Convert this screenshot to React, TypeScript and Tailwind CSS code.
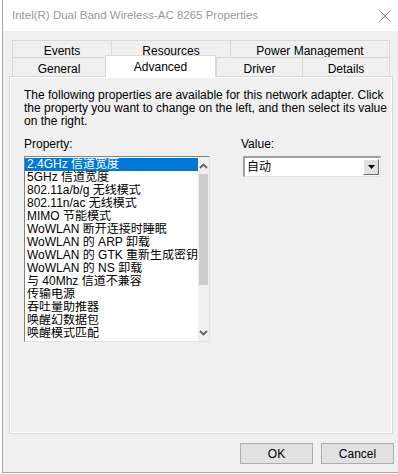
import React from "react";

const PROPERTIES = [
    "2.4GHz 信道宽度",
    "5GHz 信道宽度",
    "802.11a/b/g 无线模式",
    "802.11n/ac 无线模式",
    "MIMO 节能模式",
    "WoWLAN 断开连接时睡眠",
    "WoWLAN 的 ARP 卸载",
    "WoWLAN 的 GTK 重新生成密钥",
    "WoWLAN 的 NS 卸载",
    "与 40Mhz 信道不兼容",
    "传输电源",
    "吞吐量助推器",
    "唤醒幻数据包",
    "唤醒模式匹配",
];

function Tab({ label, width, last }: { label: string; width: string; last?: boolean }) {
    return (
        <div
            className={`${width} h-full flex items-center justify-center pt-[3px] border-t border-l border-[#d9d9d9] ${
                last ? "border-r" : ""
            } bg-[#f0f0f0] text-[12px] leading-none text-black`}
        >
            {label}
        </div>
    );
}

function ScrollBar() {
    return (
        <div className="w-[17px] h-full flex flex-col bg-[#f0f0f0]">
            <div className="h-[17px] flex items-center justify-center">
                <svg width="9" height="6" viewBox="0 0 9 6">
                    <path d="M1 5 L4.5 1.5 L8 5" fill="none" stroke="#606060" strokeWidth="1.8" />
                </svg>
            </div>
            <div className="h-[111px] mx-[1px] bg-[#cdcdcd]" />
            <div className="flex-1" />
            <div className="h-[17px] flex items-center justify-center">
                <svg width="9" height="6" viewBox="0 0 9 6">
                    <path d="M1 1 L4.5 4.5 L8 1" fill="none" stroke="#606060" strokeWidth="1.8" />
                </svg>
            </div>
        </div>
    );
}

export default function App() {
    return (
        <div className="w-[398px] h-[474px] bg-white overflow-hidden font-['Liberation_Sans','Noto_Sans_CJK_SC',sans-serif]">
            <div className="ml-[2px] w-[396px] h-[473px] border-l border-b border-[#a8a8a8] bg-[#f0f0f0] flex flex-col">
                {/* title bar */}
                <div className="h-[31px] bg-white flex items-center justify-between pl-[9px] pr-[7px]">
                    <span className="text-[11.5px] text-[#999999]">Intel(R) Dual Band Wireless-AC 8265 Properties</span>
                    <svg width="12" height="12" viewBox="0 0 12 12">
                        <path d="M0.5 0.5 L11.5 11.5 M11.5 0.5 L0.5 11.5" stroke="#888888" strokeWidth="1" />
                    </svg>
                </div>

                <div className="pt-[9px] pl-[6px]">
                    {/* tabs */}
                    <div className="ml-[3px] w-[378px] h-[17px] flex">
                        <Tab label="Events" width="w-[99px]" />
                        <Tab label="Resources" width="w-[119px]" />
                        <Tab label="Power Management" width="w-[160px]" last />
                    </div>
                    <div className="ml-[3px] w-[378px] h-[19px] flex">
                        <Tab label="General" width="w-[93px]" />
                        <div className="relative z-10 w-[111px] h-[22px] -mt-[2px] flex items-start justify-center pt-[5px] bg-white border-t border-l border-r border-[#d9d9d9] text-[12px] leading-none text-black">
                            Advanced
                        </div>
                        <Tab label="Driver" width="w-[86px]" />
                        <Tab label="Details" width="w-[88px]" last />
                    </div>

                    {/* page */}
                    <div className="w-[384px] h-[358px] border border-[#d9d9d9]">
                        <div className="h-full border border-white pl-[13px] pt-[11px]">
                            <p className="text-[12px] leading-[13px] text-black whitespace-nowrap">
                                The following properties are available for this network adapter. Click
                                <br />
                                the property you want to change on the left, and then select its value
                                <br />
                                on the right.
                            </p>

                            <div className="mt-[10px] flex gap-[31px]">
                                <div className="flex flex-col">
                                    <span className="text-[12px] leading-[13px] text-black">Property:</span>
                                    <div className="mt-[5px] w-[186px] h-[186px] flex border-t border-l border-[#828282] border-r-[#e3e3e3] border-b-[#e3e3e3] border-r border-b bg-white">
                                        <div className="flex-1 flex flex-col pt-[1px]">
                                            {PROPERTIES.map((p, i) => (
                                                <div
                                                    key={p}
                                                    className={`h-[13px] pl-[2px] text-[12px] leading-[13px] whitespace-nowrap overflow-hidden ${
                                                        i === 0 ? "bg-[#0078d7] text-white" : "text-black"
                                                    }`}
                                                >
                                                    {p}
                                                </div>
                                            ))}
                                        </div>
                                        <ScrollBar />
                                    </div>
                                </div>

                                <div className="flex flex-col">
                                    <span className="text-[12px] leading-[13px] text-black">Value:</span>
                                    <div className="mt-[5px] ml-[2px] w-[138px] h-[21px] border-t-2 border-l-2 border-[#a0a0a0] border-r border-b border-r-[#e3e3e3] border-b-[#e3e3e3] bg-white flex items-center">
                                        <span className="flex-1 pl-[2px] text-[12px] leading-none text-black">自动</span>
                                        <div className="w-[16px] h-[16px] mr-[1px] bg-[#e1e1e1] border border-t-white border-l-white border-r-[#696969] border-b-[#696969] flex items-center justify-center">
                                            <svg width="7" height="4" viewBox="0 0 7 4">
                                                <path d="M0 0 L7 0 L3.5 4 Z" fill="#000000" />
                                            </svg>
                                        </div>
                                    </div>
                                </div>
                            </div>
                        </div>
                    </div>

                    {/* buttons */}
                    <div className="mt-[9px] flex justify-end gap-[8px] pr-[4px]">
                        <button className="w-[73px] h-[21px] bg-[#e1e1e1] border border-[#adadad] text-[12px] leading-none text-black">
                            OK
                        </button>
                        <button className="w-[73px] h-[21px] bg-[#e1e1e1] border border-[#adadad] text-[12px] leading-none text-black">
                            Cancel
                        </button>
                    </div>
                </div>
            </div>
        </div>
    );
}
